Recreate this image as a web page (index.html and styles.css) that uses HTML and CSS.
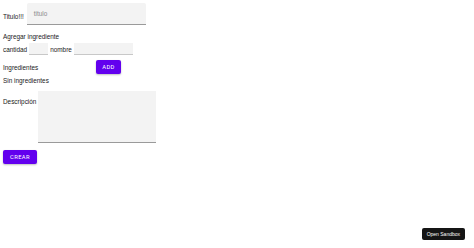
FILE: index.html
```html
<!DOCTYPE html>
<html>
<head>
<meta charset="utf-8">
<link rel="stylesheet" href="styles.css">
</head>
<body>
<div class="page">
  <div class="row title-row">
    <span class="label">Titulo!!!</span>
    <div class="field title-field"><span class="ph">titulo</span></div>
  </div>
  <div class="sub">Agregar ingrediente</div>
  <div class="row ing-row">
    <span class="label">cantidad</span>
    <div class="field small qty"></div>
    <span class="label">nombre</span>
    <div class="field small name"></div>
  </div>
  <div class="row list-row">
    <span class="label">Ingredientes</span>
    <button class="btn add">ADD</button>
  </div>
  <div class="empty">Sin ingredientes</div>
  <div class="row desc-row">
    <span class="label desc-label">Descripción</span>
    <div class="field area"></div>
  </div>
  <button class="btn create">CREAR</button>
</div>
<div class="sandbox">Open Sandbox</div>
</body>
</html>
```
FILE: styles.css
```css
html, body {
  margin: 0;
  padding: 0;
  background: #fff;
}
body {
  font-family: "Liberation Sans", Arial, sans-serif;
  font-size: 6.4px;
  color: #1a1a1a;
}
.page {
  padding: 3px 3px;
  display: flex;
  flex-direction: column;
  align-items: flex-start;
}
.row {
  display: flex;
  align-items: center;
}
.field {
  background: #f3f3f3;
  border-bottom: 1px solid #9a9a9a;
  box-sizing: border-box;
}
.title-row .label {
  margin-top: 4px;
}
.title-field {
  width: 119px;
  height: 22px;
  margin-left: 3px;
  padding: 7px 7px 0;
  border-top-left-radius: 2px;
  border-top-right-radius: 2px;
}
.ph {
  color: #8a8a8a;
}
.sub {
  margin-top: 8px;
  line-height: 7px;
}
.ing-row {
  margin-top: 3px;
}
.small {
  height: 12px;
  border-bottom-color: #c8c8c8;
}
.qty {
  width: 19px;
  margin-left: 2px;
  margin-right: 2px;
}
.name {
  width: 59px;
  margin-left: 2px;
}
.list-row {
  margin-top: 5px;
  height: 14px;
}
.list-row .label {
  width: 93px;
  margin-top: 1px;
}
.btn {
  background: #6200ee;
  color: #fff;
  border: none;
  border-radius: 2px;
  font-family: "Roboto", "Liberation Sans", sans-serif;
  font-size: 5.8px;
  letter-spacing: 0.4px;
  font-weight: 400;
  padding: 0;
  height: 14px;
  box-shadow: 0 1px 2px rgba(0,0,0,0.25);
}
.add {
  width: 25px;
}
.empty {
  margin-top: 3px;
  line-height: 8px;
}
.desc-row {
  margin-top: 6px;
  align-items: flex-start;
}
.desc-label {
  margin-top: 7px;
  width: 35px;
}
.area {
  width: 118px;
  height: 52px;
}
.create {
  margin-top: 7px;
  width: 34px;
}
.sandbox {
  position: fixed;
  right: 9px;
  bottom: 8px;
  background: #151515;
  color: #fff;
  font-size: 5px;
  padding: 3px 5px;
  border-radius: 2px;
  line-height: 6px;
}
```
